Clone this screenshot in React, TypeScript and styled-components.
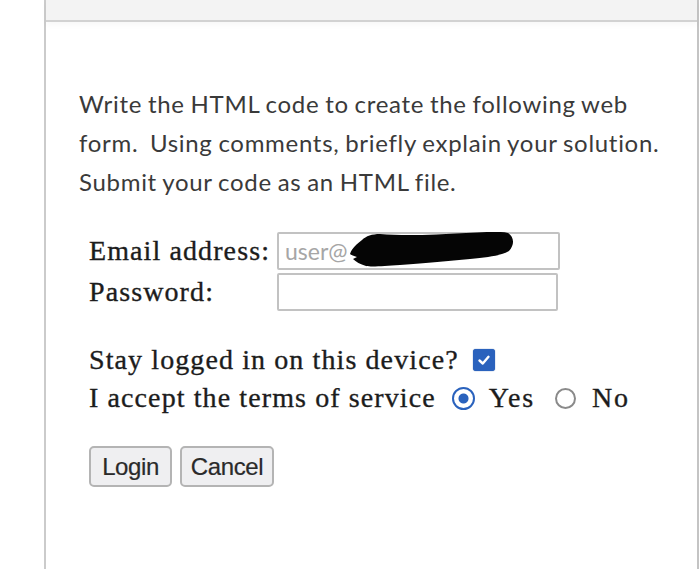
import styled, { createGlobalStyle } from "styled-components";

const GlobalStyle = createGlobalStyle`
  html, body {
    margin: 0;
    padding: 0;
    background: #ffffff;
  }
`;

function App() {
  return (
    <>
      <GlobalStyle />
      <StPage>
        <StPanel>
          <StHeader />
          <StContent>
            <StPrompt>
              Write the HTML code to create the following web
              <br />
              form.&nbsp; Using comments, briefly explain your solution.
              <br />
              Submit your code as an HTML file.
            </StPrompt>
            <StForm>
              <StFields>
                <StLabel>Email address:</StLabel>
                <StInputWrap>
                  <StInput defaultValue="user@" />
                  <StScribble viewBox="0 0 170 36" aria-hidden="true">
                    <path d="M2 22 C4 16 9 12 14 8 C18 4 24 2 32 2 C55 4 85 3 118 1 C138 0 152 -1 160 1 C166 5 167 12 161 19 C152 24 140 25 122 27 C100 29 80 31 52 33 C36 34 24 35 18 34 C12 32 8 30 5 27 L9 25 C6 24 3 23 2 22 Z" />
                  </StScribble>
                </StInputWrap>
                <StLabel>Password:</StLabel>
                <StInput type="password" $narrow />
              </StFields>

              <StOptions>
                <StLine>
                  Stay logged in on this device?
                  <StCheck aria-checked="true">
                    <svg viewBox="0 0 16 16" width="16" height="16">
                      <path d="M3.5 8.5 L6.8 11.5 L12.5 4.8" fill="none" stroke="#fff" strokeWidth="2.4" strokeLinecap="round" strokeLinejoin="round" />
                    </svg>
                  </StCheck>
                </StLine>
                <StLine>
                  I accept the terms of service
                  <StRadio $checked />
                  <StChoice>Yes</StChoice>
                  <StRadio />
                  <StChoice>No</StChoice>
                </StLine>
              </StOptions>

              <StButtons>
                <StButton $w="83px">Login</StButton>
                <StButton $w="94px">Cancel</StButton>
              </StButtons>
            </StForm>
          </StContent>
        </StPanel>
      </StPage>
    </>
  );
}

export default App;

const StPage = styled.div`
  display: flex;
  padding-left: 44px;
  height: 569px;
  overflow: hidden;
`;

const StPanel = styled.div`
  width: 651px;
  height: 569px;
  border-left: 2px solid #cbcbcb;
  border-right: 2px solid #c4c4c4;
  display: flex;
  flex-direction: column;
`;

const StHeader = styled.div`
  height: 20px;
  background: #f3f3f3;
  border-bottom: 2px solid #d2d2d2;
  box-shadow: 0 3px 6px rgba(0, 0, 0, 0.03);
`;

const StContent = styled.div`
  padding: 62px 0 0 33px;
`;

const StPrompt = styled.p`
  margin: 0;
  white-space: nowrap;
  font-family: Lato, "Open Sans", sans-serif;
  font-size: 24px;
  line-height: 39px;
  color: #3a3a3a;
  letter-spacing: 0.7px;
  word-spacing: -1px;
`;

const StForm = styled.div`
  margin: 30px 0 0 10px;
  font-family: "Liberation Serif", "Times New Roman", serif;
  font-size: 28px;
  letter-spacing: 1.1px;
  color: #1c1c1c;
  -webkit-text-stroke: 0.35px #1c1c1c;
`;

const StFields = styled.div`
  display: grid;
  grid-template-columns: 188px auto;
  grid-auto-rows: 39px;
  row-gap: 2px;
  align-items: center;
`;

const StLabel = styled.div`
  line-height: 38px;
`;

const StInputWrap = styled.div`
  position: relative;
  width: 283px;
  height: 38px;
`;

const StInput = styled.input<{ $narrow?: boolean }>`
  box-sizing: border-box;
  width: ${(p) => (p.$narrow ? "281px" : "283px")};
  height: 38px;
  border: 2px solid #c2c2c2;
  border-radius: 2px;
  padding: 0 6px;
  font-family: Lato, "Open Sans", sans-serif;
  font-size: 23px;
  letter-spacing: 0;
  color: #a6a6a6;
  -webkit-text-stroke: 0;
  background: #fff;
  outline: none;
`;

const StScribble = styled.svg`
  position: absolute;
  left: 71px;
  top: 0;
  width: 170px;
  height: 36px;
  fill: #050505;
`;

const StOptions = styled.div`
  margin-top: 30px;
`;

const StLine = styled.div`
  display: flex;
  align-items: center;
  height: 38px;
  white-space: nowrap;
`;

const StCheck = styled.span`
  display: inline-flex;
  align-items: center;
  justify-content: center;
  width: 22px;
  height: 22px;
  margin-left: 14px;
  border-radius: 3px;
  background: #2a62bd;
  box-shadow: 0 0 1px #1b4d9c;
`;

const StRadio = styled.span<{ $checked?: boolean }>`
  box-sizing: border-box;
  display: inline-block;
  width: ${(p) => (p.$checked ? "23px" : "21px")};
  height: ${(p) => (p.$checked ? "23px" : "21px")};
  margin: 0 ${(p) => (p.$checked ? "14px 0 16px" : "16px 0 20px")};
  border-radius: 50%;
  border: 2px solid ${(p) => (p.$checked ? "#2a62bd" : "#8a8a8a")};
  background: ${(p) =>
    p.$checked
      ? "radial-gradient(circle, #2a62bd 0 4.5px, #ffffff 5.5px)"
      : "#fff"};
`;

const StChoice = styled.span`
  letter-spacing: 1.8px;
`;

const StButtons = styled.div`
  display: flex;
  gap: 8px;
  margin-top: 29px;
`;

const StButton = styled.button<{ $w: string }>`
  width: ${(p) => p.$w};
  height: 41px;
  padding: 0;
  border: 2px solid #b4b4b4;
  border-radius: 5px;
  background: #efeff1;
  font-family: "Liberation Sans", Arial, sans-serif;
  font-size: 24px;
  letter-spacing: -0.4px;
  color: #2a2a2a;
  -webkit-text-stroke: 0.2px #2a2a2a;
`;
